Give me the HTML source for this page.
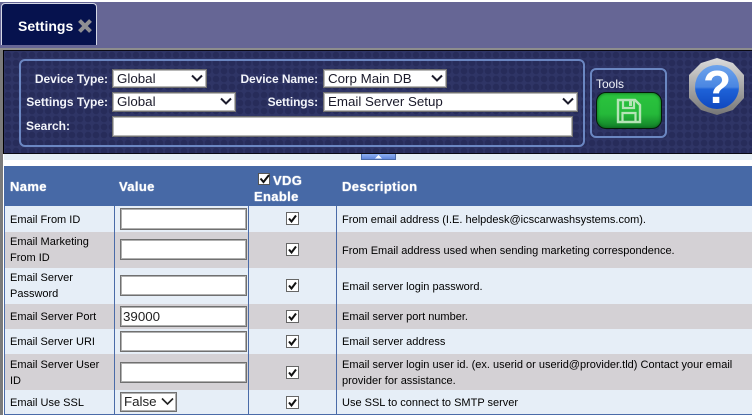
<!DOCTYPE html>
<html><head><meta charset="utf-8"><style>
html,body{margin:0;padding:0;background:#fff}
#p{position:relative;width:752px;height:415px;overflow:hidden;background:#fff;font-family:"Liberation Sans",sans-serif;color:#111}
#p div,#p svg{position:absolute;box-sizing:border-box}
.l{color:#f2f4fa;font-weight:bold;font-size:12px;text-align:right;white-space:nowrap;height:16px;line-height:16px}
.s{background:#fff;border:1px solid #707070;box-shadow:inset 0 0 0 1px #b8b8b8;font-size:13.33px;line-height:17px;padding-left:4px;color:#1a1a2a;white-space:nowrap}
.t{font-size:11px;line-height:16px;color:#000;white-space:nowrap;margin-top:1px}
.h{color:#fff;font-weight:bold;font-size:13px;letter-spacing:.35px;line-height:16px;white-space:nowrap;text-shadow:0 0 1px #fff}
.r{left:5px;width:747px}
.v{top:206px;height:208px;width:1px;background:#4a6ba8}
.i{left:120px;width:127px;background:#fff;border:1px solid #707070;box-shadow:inset 0 0 0 1px #b0b0b0;font-size:13.33px;line-height:19px;padding-left:2px;color:#222}
.c{left:286px;width:13px;height:13px;background:#fff;border:1px solid #666}
</style></head><body><div id="p">
<div style="left:0;top:0;width:752px;height:2px;background:#fff"></div>
<div style="left:0;top:2px;width:752px;height:46px;background:#666695"></div>
<div style="left:1px;top:3px;width:96px;height:42px;background:#06124e;border:1px solid #d5d8e6;border-bottom:0;border-radius:4px 4px 0 0"></div>
<div style="left:18px;top:17px;color:#fff;font-weight:bold;font-size:14px;line-height:18px;white-space:nowrap">Settings</div>
<svg style="left:77px;top:18px" width="16" height="16" viewBox="0 0 16 16"><path d="M2.500 2.500L13.500 13.500M13.500 2.500L2.500 13.500" stroke="#8f8f93" stroke-width="4"/></svg>
<div style="left:0;top:48px;width:752px;height:2px;background:#8d8d8d"></div>
<div style="left:0;top:50px;width:752px;height:104px;background:#0a0a14"></div>
<div style="left:0;top:50px;width:3px;height:365px;background:#7b7b7b"></div>
<div style="left:3px;top:50px;width:1px;height:104px;background:#000"></div>
<div style="left:4px;top:51px;width:748px;height:102px;background-color:#2f3566;background-image:radial-gradient(circle at 4px 4px,#272c5a 3px,transparent 3.6px);background-size:8px 8px"></div>

<div style="left:19px;top:59px;width:566px;height:88px;border:2px solid #6b87c2;border-radius:6px"></div>
<div class="l" style="left:20px;width:88px;top:71px">Device Type:</div>
<div class="l" style="left:20px;width:88px;top:94px">Settings Type:</div>
<div class="l" style="left:20px;width:50px;top:118px">Search:</div>
<div class="l" style="left:220px;width:98px;top:71px;letter-spacing:-.1px">Device Name:</div>
<div class="l" style="left:220px;width:98px;top:94px;letter-spacing:-.1px">Settings:</div>

<div class="s" style="left:112px;top:69px;width:95px;height:19px">Global</div>
<div class="s" style="left:112px;top:92px;width:124px;height:20px">Global</div>
<div class="s" style="left:323px;top:69px;width:124px;height:19px">Corp Main DB</div>
<div class="s" style="left:323px;top:92px;width:255px;height:20px">Email Server Setup</div>
<div class="s" style="left:112px;top:116px;width:461px;height:21px"></div>
<svg style="left:191px;top:74px" width="12" height="9"><path d="M1 1.500L6 6.500L11 1.500" fill="none" stroke="#1c1c2c" stroke-width="2"/></svg>
<svg style="left:220px;top:97px" width="12" height="9"><path d="M1 1.500L6 6.500L11 1.500" fill="none" stroke="#1c1c2c" stroke-width="2"/></svg>
<svg style="left:431px;top:74px" width="12" height="9"><path d="M1 1.500L6 6.500L11 1.500" fill="none" stroke="#1c1c2c" stroke-width="2"/></svg>
<svg style="left:562px;top:97px" width="12" height="9"><path d="M1 1.500L6 6.500L11 1.500" fill="none" stroke="#1c1c2c" stroke-width="2"/></svg>

<div style="left:590px;top:68px;width:77px;height:70px;border:2px solid #6b87c2;border-radius:6px"></div>
<div style="left:596px;top:76px;color:#f2f4fa;font-size:12px;line-height:16px">Tools</div>
<div style="left:596px;top:92px;width:66px;height:37px;border-radius:10px;background:linear-gradient(#2bc43e,#25b93a 60%,#128028);border:1.500px solid #041a09;box-shadow:inset 0 0 3px #0a5a1c"></div>
<svg style="left:616px;top:98px" width="26" height="26" viewBox="0 0 26 26"><path d="M2 2H19L24 7V24H2Z" fill="none" stroke="#b5e4b6" stroke-width="2.400"/><path d="M7 3V10H18V3" fill="none" stroke="#b5e4b6" stroke-width="2.200"/><rect x="13" y="3" width="3" height="5" fill="#b5e4b6"/><path d="M6.500 24V15H19.500V24" fill="none" stroke="#b5e4b6" stroke-width="2.200"/></svg>

<svg style="left:687px;top:58px" width="58" height="58" viewBox="0 0 58 58"><defs><linearGradient id="g" x1="0" y1="0" x2="0" y2="1"><stop offset="0" stop-color="#dcdcdc"/><stop offset=".5" stop-color="#a8a8a8"/><stop offset="1" stop-color="#767676"/></linearGradient><linearGradient id="b" x1="0" y1="0" x2="0" y2="1"><stop offset="0" stop-color="#6ea4ec"/><stop offset=".5" stop-color="#4a86e2"/><stop offset=".55" stop-color="#1e62d8"/><stop offset="1" stop-color="#0f48bf"/></linearGradient></defs><polygon points="30,0 46,5 57,17 57,40 46,52 30,57 14,52 2,40 2,17 14,5" fill="url(#g)"/><circle cx="30" cy="29" r="22" fill="url(#b)"/><text x="30" y="45" text-anchor="middle" font-family="Liberation Sans" font-weight="bold" font-size="46" fill="#fff">?</text></svg>

<div style="left:4px;top:154px;width:748px;height:6px;background:#e6eff5"></div>
<div style="left:361px;top:154px;width:35px;height:6px;background:linear-gradient(#8fb0f0,#5f86dc);border:1px solid #4a6ba8;border-top:0"></div>
<svg style="left:374px;top:154px" width="9" height="5"><path d="M1 4.500L4.500 1L8 4.500Z" fill="#fff"/></svg>

<div style="left:4px;top:166px;width:748px;height:40px;background:#4769a6"></div>
<div class="h" style="left:10px;top:179px">Name</div>
<div class="h" style="left:119px;top:179px">Value</div>
<div style="left:258px;top:173px;width:12px;height:12px;background:#fff;border:1px solid #555"></div>
<svg style="left:258px;top:172px" width="13" height="13"><path d="M2.500 6.500L5.500 10L11 3" fill="none" stroke="#111" stroke-width="2"/></svg>
<div class="h" style="left:273px;top:173px">VDG</div>
<div class="h" style="left:254px;top:189px">Enable</div>
<div class="h" style="left:342px;top:179px">Description</div>

<div class="r" style="top:206px;height:26px;background:#e6eef7"></div>
<div class="r" style="top:232px;height:36px;background:#d4d1d5"></div>
<div class="r" style="top:268px;height:36px;background:#e6eef7"></div>
<div class="r" style="top:304px;height:25px;background:#d4d1d5"></div>
<div class="r" style="top:329px;height:25px;background:#e6eef7"></div>
<div class="r" style="top:354px;height:36px;background:#d4d1d5"></div>
<div class="r" style="top:390px;height:24px;background:#e6eef7"></div>
<div style="left:4px;top:414px;width:748px;height:1px;background:#4a6ba8"></div>
<div class="v" style="left:4px"></div>
<div class="v" style="left:114px"></div>
<div class="v" style="left:248px"></div>
<div class="v" style="left:336px"></div>

<div class="t" style="left:10px;top:211px">Email From ID</div>
<div class="t" style="left:10px;top:233px">Email Marketing<br>From ID</div>
<div class="t" style="left:10px;top:269px">Email Server<br>Password</div>
<div class="t" style="left:10px;top:308px">Email Server Port</div>
<div class="t" style="left:10px;top:333px">Email Server URI</div>
<div class="t" style="left:10px;top:356px">Email Server User<br>ID</div>
<div class="t" style="left:10px;top:394px">Email Use SSL</div>

<div class="i" style="top:208px;height:22px"></div>
<div class="i" style="top:239px;height:21px"></div>
<div class="i" style="top:275px;height:21px"></div>
<div class="i" style="top:306px;height:21px">39000</div>
<div class="i" style="top:331px;height:21px"></div>
<div class="i" style="top:362px;height:21px"></div>
<div class="i" style="top:392px;width:57px;height:20px;line-height:17px;padding-left:3px">False</div>
<svg style="left:161px;top:397px" width="13" height="9"><path d="M1 1.500L6.500 7L12 1.500" fill="none" stroke="#222" stroke-width="1.600"/></svg>

<div class="c" style="top:212px"></div>
<div class="c" style="top:243px"></div>
<div class="c" style="top:279px"></div>
<div class="c" style="top:310px"></div>
<div class="c" style="top:335px"></div>
<div class="c" style="top:366px"></div>
<div class="c" style="top:396px"></div>
<svg style="left:286px;top:212px" width="13" height="13"><path d="M3 6.500L5.500 9.500L10 3.500" fill="none" stroke="#111" stroke-width="2"/></svg>
<svg style="left:286px;top:243px" width="13" height="13"><path d="M3 6.500L5.500 9.500L10 3.500" fill="none" stroke="#111" stroke-width="2"/></svg>
<svg style="left:286px;top:279px" width="13" height="13"><path d="M3 6.500L5.500 9.500L10 3.500" fill="none" stroke="#111" stroke-width="2"/></svg>
<svg style="left:286px;top:310px" width="13" height="13"><path d="M3 6.500L5.500 9.500L10 3.500" fill="none" stroke="#111" stroke-width="2"/></svg>
<svg style="left:286px;top:335px" width="13" height="13"><path d="M3 6.500L5.500 9.500L10 3.500" fill="none" stroke="#111" stroke-width="2"/></svg>
<svg style="left:286px;top:366px" width="13" height="13"><path d="M3 6.500L5.500 9.500L10 3.500" fill="none" stroke="#111" stroke-width="2"/></svg>
<svg style="left:286px;top:396px" width="13" height="13"><path d="M3 6.500L5.500 9.500L10 3.500" fill="none" stroke="#111" stroke-width="2"/></svg>

<div class="t" style="left:342px;top:211px">From email address (I.E. helpdesk@icscarwashsystems.com).</div>
<div class="t" style="left:342px;top:242px">From Email address used when sending marketing correspondence.</div>
<div class="t" style="left:342px;top:278px">Email server login password.</div>
<div class="t" style="left:342px;top:308px">Email server port number.</div>
<div class="t" style="left:342px;top:333px">Email server address</div>
<div class="t" style="left:342px;top:356px">Email server login user id. (ex. userid or userid@provider.tld) Contact your email<br>provider for assistance.</div>
<div class="t" style="left:342px;top:394px">Use SSL to connect to SMTP server</div>
</div></body></html>
